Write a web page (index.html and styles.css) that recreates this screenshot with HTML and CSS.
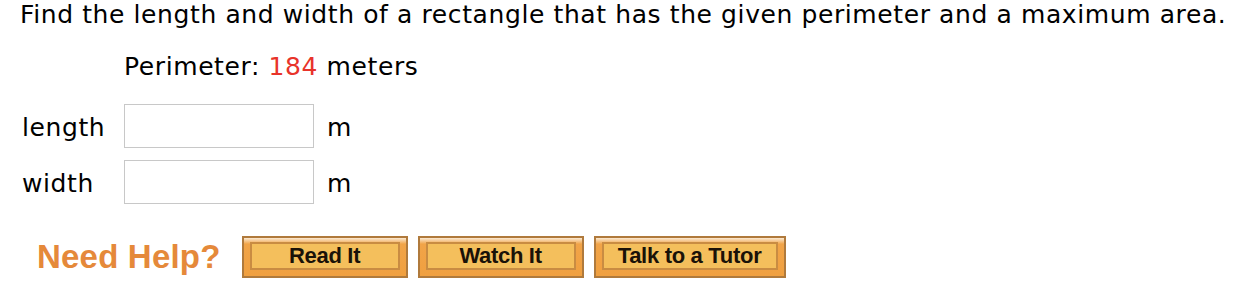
FILE: index.html
```html
<!DOCTYPE html>
<html>
<head>
<meta charset="utf-8">
<link rel="stylesheet" href="styles.css">
</head>
<body>
<div class="page">
  <p class="question">Find the length and width of a rectangle that has the given perimeter and a maximum area.</p>
  <p class="given">Perimeter: <span class="num">184</span> meters</p>
  <div class="answers">
    <div class="row"><span class="label">length</span><span class="field"></span><span class="unit">m</span></div>
    <div class="row"><span class="label">width</span><span class="field"></span><span class="unit">m</span></div>
  </div>
  <div class="help">
    <span class="need">Need Help?</span>
    <span class="btn btn-read"><span class="inner">Read It</span></span>
    <span class="btn btn-watch"><span class="inner">Watch It</span></span>
    <span class="btn btn-tutor"><span class="inner">Talk to a Tutor</span></span>
  </div>
</div>
</body>
</html>
```

FILE: styles.css
```css
html, body { margin: 0; padding: 0; background: #fff; }
.page {
  font-family: "DejaVu Sans", Verdana, sans-serif;
  color: #000;
  font-size: 25px;
  letter-spacing: 0.6px;
  padding: 0 0 0 20px;
}
.question { margin: 0; line-height: 30px; }
.given { margin: 22px 0 0 104px; line-height: 30px; }
.num { color: #e8332a; }
.answers { margin-top: 22px; display: flex; flex-direction: column; gap: 12px; padding-left: 2px; }
.row { display: flex; align-items: center; height: 44px; }
.label { width: 102px; padding-top: 3px; }
.unit { margin-left: 13px; padding-top: 3px; }
.field {
  box-sizing: border-box;
  width: 190px; height: 44px;
  border: 1px solid #c8c8c8;
  background: #fff;
}
.help { margin-top: 32px; display: flex; align-items: center; padding-left: 17px; }
.need {
  font-family: "Liberation Sans", Arial, sans-serif;
  font-weight: bold;
  font-size: 33px;
  letter-spacing: 0.2px;
  color: #e5893a;
  margin-right: 21px;
}
.btn {
  box-sizing: border-box;
  height: 42px;
  border: 2px solid #b07a3c;
  background: linear-gradient(#fbe9d2 0px, #f1a448 6px, #f0a040 100%);
  padding: 4px 6px 6px 6px;
  margin-right: 10px;
  display: flex;
}
.inner {
  flex: 1;
  border: 2px solid #c98c42;
  background: #f4bf5c;
  display: flex; align-items: center; justify-content: center;
  font-family: "Liberation Sans", Arial, sans-serif;
  font-weight: bold;
  font-size: 22px;
  letter-spacing: -0.3px;
  color: #1a1208;
}
.btn-read { width: 166px; }
.btn-watch { width: 166px; }
.btn-tutor { width: 192px; }
```
